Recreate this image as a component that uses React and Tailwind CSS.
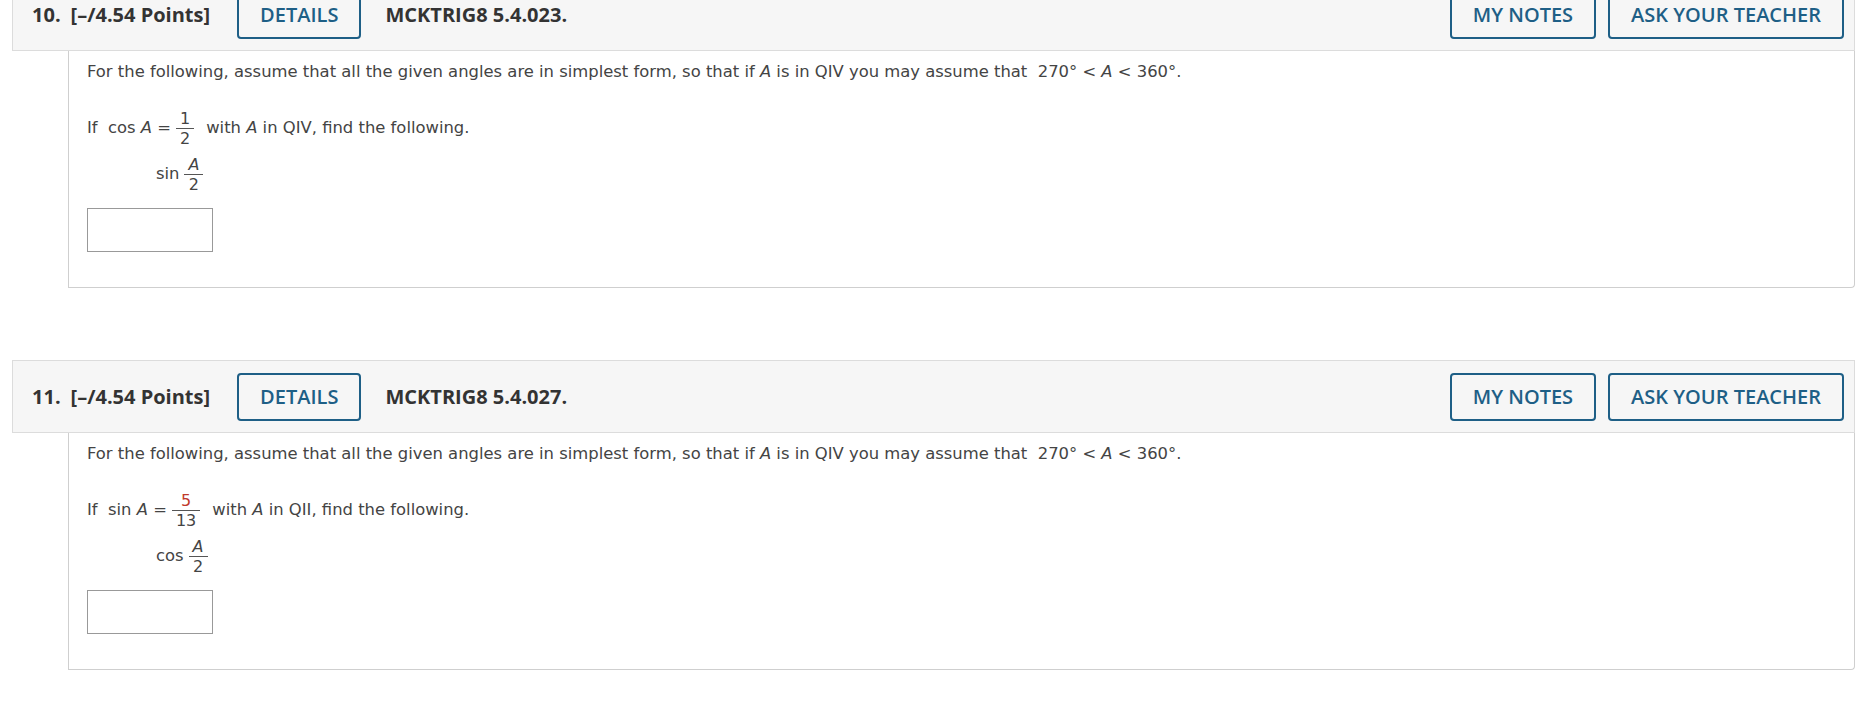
import React from 'react'

const head = { fontFamily: '"Open Sans", "Liberation Sans", sans-serif' }
const body = { fontFamily: '"DejaVu Sans", Verdana, sans-serif' }

function OutlineButton({ children }) {
  return (
    <button
      className="h-[48px] px-[21px] border-2 border-[#1e5f86] rounded-[4px] text-[#1e5f86] text-[20px] font-semibold bg-transparent"
      style={head}
    >
      {children}
    </button>
  )
}

function Frac({ top, bottom, topClass = '', italic = false }) {
  return (
    <span className="inline-flex flex-col items-center ml-[5px] mr-[12px] text-[16px] leading-[19px]">
      <span className={`px-[4px] ${italic ? 'italic' : ''} ${topClass}`}>{top}</span>
      <span className="block w-full h-px bg-[#555]" />
      <span className="px-[4px]">{bottom}</span>
    </span>
  )
}

function Question({ num, code, trig, given, quad, ask }) {
  return (
    <div>
      <div className="flex items-center h-[73px] bg-[#f6f6f6] border border-[#dcdcdc] mx-[12px] pl-[19px] pr-[10px]" style={head}>
        <span className="text-[20px] font-bold text-[#333]">{num}.</span>
        <span className="ml-[10px] text-[20px] font-bold text-[#333]">[–/4.54 Points]</span>
        <span className="ml-[27px]">
          <OutlineButton>DETAILS</OutlineButton>
        </span>
        <span className="ml-[24px] text-[20px] font-bold text-[#333]">{code}</span>
        <div className="ml-auto flex gap-[12px]">
          <OutlineButton>MY NOTES</OutlineButton>
          <OutlineButton>ASK YOUR TEACHER</OutlineButton>
        </div>
      </div>
      <div className="ml-[68px] mr-[12px] h-[237px] bg-white border border-t-0 border-[#cfcfcf] rounded-br-[4px] pl-[18px] pt-[10px] text-[16.4px] text-[#444]" style={body}>
        <p className="leading-[22px]">
          For the following, assume that all the given angles are in simplest form, so that if <i>A</i> is in QIV you may assume that&nbsp; 270° &lt; <i>A</i> &lt; 360°.
        </p>
        <p className="mt-[26px] flex items-center">
          <span>If&nbsp; {trig} <i>A</i> =</span>
          {given}
          <span>with <i>A</i> in {quad}, find the following.</span>
        </p>
        <p className="mt-[7px] ml-[69px] flex items-center">
          <span>{ask}</span>
          <Frac top="A" bottom="2" italic />
        </p>
        <div className="mt-[14px] w-[126px] h-[44px] border border-[#999] bg-white" />
      </div>
    </div>
  )
}

export default function App() {
  return (
    <div className="w-[1867px] h-[703px] bg-white overflow-hidden">
      <div className="-mt-[22px]">
        <Question
          num="10"
          code="MCKTRIG8 5.4.023."
          trig="cos"
          given={<Frac top="1" bottom="2" />}
          quad="QIV"
          ask="sin"
        />
        <div className="h-[72px]" />
        <Question
          num="11"
          code="MCKTRIG8 5.4.027."
          trig="sin"
          given={<Frac top="5" bottom="13" topClass="text-[#c0392b]" />}
          quad="QII"
          ask="cos"
        />
      </div>
    </div>
  )
}
